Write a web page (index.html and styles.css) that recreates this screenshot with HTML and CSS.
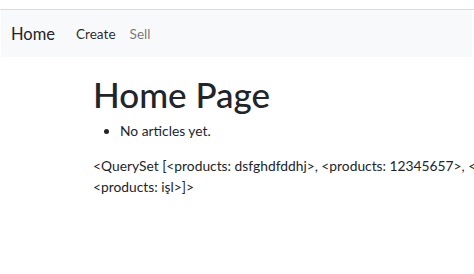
FILE: index.html
```html
<!DOCTYPE html>
<html>
<head>
<meta charset="utf-8">
<link rel="stylesheet" href="styles.css">
</head>
<body>
<div class="topline"></div>
<nav class="navbar">
  <a class="brand">Home</a>
  <div class="links">
    <a class="link active">Create</a>
    <a class="link">Sell</a>
  </div>
</nav>
<main class="content">
  <h1 class="title">Home Page</h1>
  <ul class="list">
    <li>No articles yet.</li>
  </ul>
  <p class="qs">&lt;QuerySet [&lt;products: dsfghdfddhj&gt;, &lt;products: 12345657&gt;, &lt;products: asdasd&gt;, &lt;products: işl&gt;]&gt;</p>
</main>
</body>
</html>
```
FILE: styles.css
```css
html, body {
  margin: 0;
  padding: 0;
  background: #fff;
  overflow: hidden;
  width: 474px;
  height: 274px;
}
body {
  font-family: "Lato", "Open Sans", sans-serif;
  color: #212529;
}
.topline {
  height: 9px;
  border-bottom: 1px solid #dcdcdc;
}
.navbar {
  margin: 0 2px 0 1px;
  height: 47px;
  background: #f8f9fa;
  display: flex;
  align-items: center;
  padding-left: 10px;
}
.brand {
  font-size: 16.5px;
  color: #212529;
  margin-right: 21px;
}
.links {
  display: flex;
  gap: 14px;
}
.link {
  font-size: 13.6px;
  color: rgba(0,0,0,.55);
}
.link.active {
  color: rgba(0,0,0,.85);
}
.content {
  padding-left: 93px;
  width: 560px;
}
.title {
  font-size: 35px;
  font-weight: 500;
  margin: 16px 0 5px;
  line-height: 1.2;
}
.list {
  margin: 0 0 14px;
  padding-left: 27px;
  font-size: 13.8px;
  line-height: 21px;
}
.qs {
  margin: 0;
  font-size: 13.8px;
  line-height: 21px;
}
```
